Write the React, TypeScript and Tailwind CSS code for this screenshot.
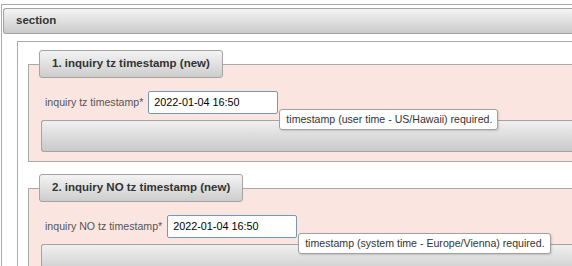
import React from "react";

const font = { fontFamily: '"Liberation Sans", Arial, sans-serif' };

function Fieldset({
  index,
  title,
  label,
  tip,
  first,
}: {
  index: number;
  title: string;
  label: string;
  tip: string;
  first?: boolean;
}) {
  return (
    <div
      className={`${first ? "mt-[22px]" : "mt-[26px]"} border border-[#a9a9a9] bg-[#fbe5e1] pb-[9px]`}
    >
      <div className="-mt-[15px] ml-[10px] flex h-[28px] w-fit items-center rounded-[3px] border border-[#a4a4a4] bg-gradient-to-b from-[#f4f4f4] to-[#cdcdcd] px-[12px] text-[11.5px] font-bold text-[#333]">
        {index}. {title}
      </div>
      <div className="mt-[13px] flex h-[23px] items-center pl-[16px]">
        <span className="text-[10.6px] text-[#555]">{label}</span>
        <div className="relative ml-[5px]">
          <div className="flex h-[23px] w-[130px] items-center rounded-[2px] border border-[#7896b6] bg-white pl-[5px] text-[10.8px] text-black">
            2022-01-04 16:50
          </div>
          <div className="absolute left-[calc(100%+1px)] top-[18px] z-20 flex h-[21px] items-center whitespace-nowrap rounded-[3px] border border-[#a0a0a0] bg-white pl-[6px] pr-[5px] text-[10.6px] text-[#333] shadow-[1px_1px_2px_rgba(0,0,0,0.15)]">
            {tip}
          </div>
        </div>
      </div>
      <div className="ml-[12px] mt-[6px] h-[32px] rounded-l-[3px] border border-r-0 border-[#a4a4a4] bg-gradient-to-b from-[#f0f0f0] to-[#c9c9c9]" />
    </div>
  );
}

export default function App() {
  return (
    <div className="h-[266px] w-[572px] overflow-hidden bg-white" style={font}>
      <div className="w-[700px] pt-[4px] pl-[1px]">
        <div className="border-l border-t border-[#ababab] pl-[1px] pt-[3px] h-[300px]">
          <div className="flex h-[26px] items-center rounded-l-[3px] border border-r-0 border-[#a4a4a4] bg-gradient-to-b from-[#f4f4f4] to-[#cbcbcb] pl-[12px] text-[11.5px] font-bold text-[#333]">
            section
          </div>
          <div className="ml-[14px] mt-[7px] border-l border-t border-[#ababab] bg-white pl-[10px] h-[400px]">
            <Fieldset
              first
              index={1}
              title="inquiry tz timestamp (new)"
              label="inquiry tz timestamp*"
              tip="timestamp (user time - US/Hawaii) required."
            />
            <Fieldset
              index={2}
              title="inquiry NO tz timestamp (new)"
              label="inquiry NO tz timestamp*"
              tip="timestamp (system time - Europe/Vienna) required."
            />
          </div>
        </div>
      </div>
    </div>
  );
}
